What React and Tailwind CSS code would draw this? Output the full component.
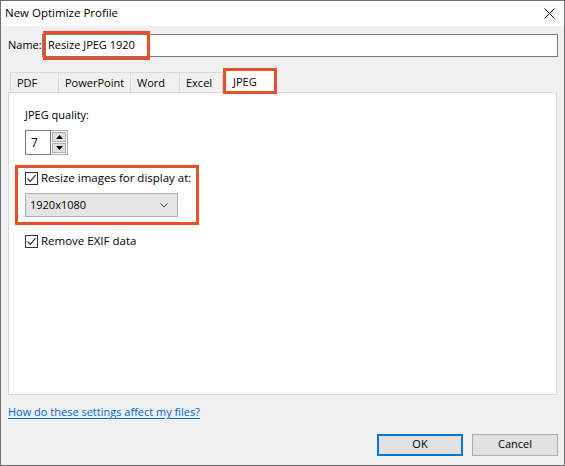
import React from 'react';

const font = { fontFamily: '"Segoe UI", "Open Sans", sans-serif' };

function Checkbox({ label }) {
  return (
    <label className="flex items-center gap-[3px] h-[14px] whitespace-nowrap">
      <span className="w-[13px] h-[13px] border border-[#333333] bg-white flex items-center justify-center">
        <svg width="11" height="11" viewBox="0 0 11 11">
          <path d="M1.5 5.5 L4.2 8.3 L9.6 2.2" fill="none" stroke="#333333" strokeWidth="1.2" />
        </svg>
      </span>
      <span className="leading-none text-[11.5px]">{label}</span>
    </label>
  );
}

function Tab({ label, width, active }) {
  if (active) {
    return (
      <div className={`relative ${width} h-[23px] -mb-px bg-white border border-b-0 border-[#d9d9d9] z-10 pl-[9px] pt-[3px]`}>
        JPEG
        <span className="absolute -left-[1px] -right-[1px] -top-[3px] bottom-[-1px] border-[3px] border-[#e6502a]" />
      </div>
    );
  }
  return (
    <div className={`${width} h-[20px] border border-b-0 border-r-0 border-[#d9d9d9] pl-[6px] pt-[2px]`}>
      {label}
    </div>
  );
}

export default function App() {
  return (
    <div
      style={font}
      className="w-[565px] h-[466px] border border-[#6f6f6f] bg-[#f0f0f0] flex flex-col text-[11px] text-black"
    >
      {/* title bar */}
      <div className="h-[25px] bg-white flex items-center justify-between pl-[4px] pr-[9px]">
        <span className="-mt-[1px] text-[11.5px]">New Optimize Profile</span>
        <svg width="11" height="11" viewBox="0 0 11 11">
          <path d="M0.5 0.5 L10.5 10.5 M10.5 0.5 L0.5 10.5" stroke="#000" strokeWidth="1" />
        </svg>
      </div>

      {/* name row */}
      <div className="flex items-center mt-[8px] pl-[7px] pr-[6px]">
        <span className="w-[34px] whitespace-nowrap">Name:</span>
        <div className="relative flex-1 h-[23px] border border-[#7a7a7a] bg-white flex items-center pl-[5px]">
          Resize JPEG 1920
          <span className="absolute left-[0px] -top-[4px] w-[107px] h-[29px] border-[3px] border-[#e6502a]" />
        </div>
      </div>

      {/* tabs */}
      <div className="flex items-end mt-[13px] ml-[9px]">
        <Tab label="PDF" width="w-[48px]" />
        <Tab label="PowerPoint" width="w-[72px]" />
        <Tab label="Word" width="w-[49px]" />
        <div className="w-[44px] h-[20px] border border-b-0 border-[#d9d9d9] pl-[6px] pt-[2px]">Excel</div>
        <Tab active width="w-[54px]" />
      </div>

      {/* panel */}
      <div className="mx-[7px] h-[303px] bg-white border border-[#d9d9d9] pl-[16px] pt-[16px]">
        <div className="leading-[12px]">JPEG quality:</div>
        <div className="flex mt-[9px] h-[25px]">
          <div className="w-[26px] border border-[#7a7a7a] pl-[5px] pt-[3px] text-[12px]">7</div>
          <div className="w-[17px] border border-l-0 border-[#adadad] flex flex-col gap-px p-[1px]">
            <div className="flex-1 bg-[#e1e1e1] border border-[#adadad] flex items-center justify-center">
              <svg width="7" height="4" viewBox="0 0 7 4"><path d="M3.5 0 L7 4 L0 4 Z" fill="#000" /></svg>
            </div>
            <div className="flex-1 bg-[#e1e1e1] border border-[#adadad] flex items-center justify-center">
              <svg width="7" height="4" viewBox="0 0 7 4"><path d="M0 0 L7 0 L3.5 4 Z" fill="#000" /></svg>
            </div>
          </div>
        </div>

        <div className="relative mt-[16px] w-[153px]">
          <Checkbox label="Resize images for display at:" />
          <div className="mt-[8px] h-[24px] w-[153px] bg-[#e5e5e5] border border-[#adadad] flex items-center justify-between pl-[4px] pr-[9px]">
            <span>1920x1080</span>
            <svg width="8" height="5" viewBox="0 0 8 5">
              <path d="M0.5 0.5 L4 4 L7.5 0.5" fill="none" stroke="#333" strokeWidth="1" />
            </svg>
          </div>
          <span className="absolute -left-[10px] -top-[6px] w-[184px] h-[60px] border-[3px] border-[#e6502a]" />
        </div>

        <div className="mt-[17px]">
          <Checkbox label="Remove EXIF data" />
        </div>
      </div>

      {/* link */}
      <div className="pl-[7px] mt-[9px]">
        <a href="#" className="text-[#0066cc] underline underline-offset-2">How do these settings affect my files?</a>
      </div>

      {/* buttons */}
      <div className="flex justify-end gap-[9px] pr-[6px] mt-[13px]">
        <button className="w-[86px] h-[22px] bg-[#e1e1e1] border-2 border-[#0078d7]">OK</button>
        <button className="w-[86px] h-[22px] bg-[#e1e1e1] border border-[#adadad]">Cancel</button>
      </div>
    </div>
  );
}
